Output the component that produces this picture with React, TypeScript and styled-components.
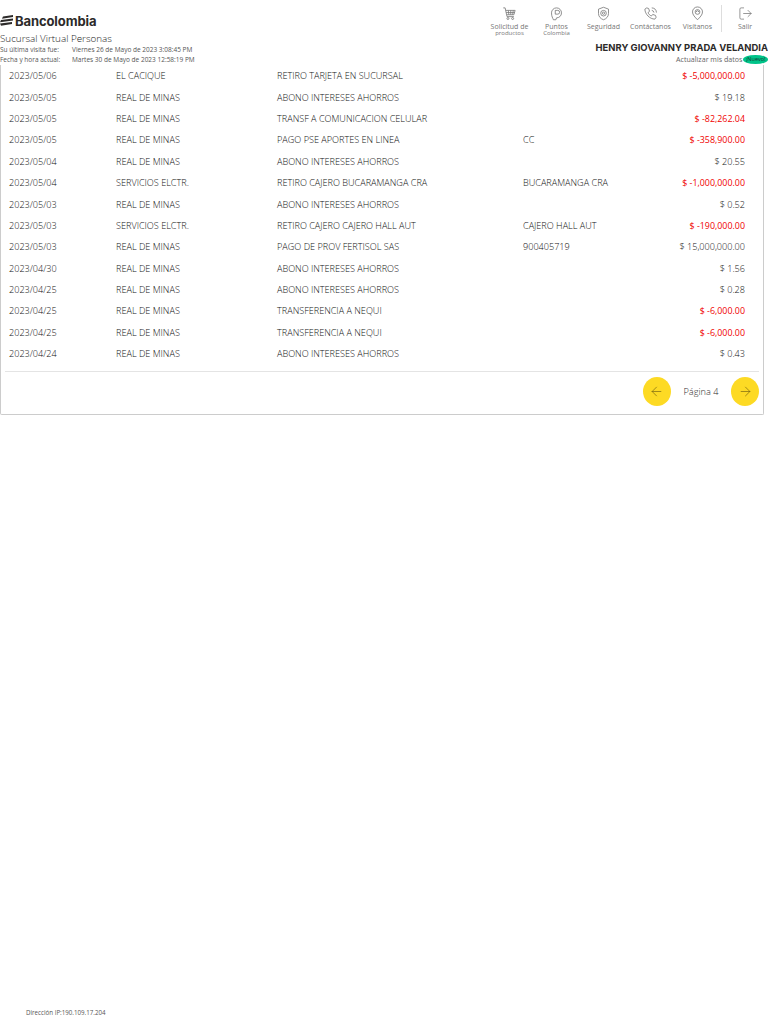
import React from "react";
import styled, { createGlobalStyle } from "styled-components";
import { ArrowLeft, ArrowRight, LogOut } from "lucide-react";

const GlobalStyle = createGlobalStyle`
	html, body {
		margin: 0;
		padding: 0;
		background: #fff;
		font-family: "Open Sans", "Liberation Sans", sans-serif;
		color: #2c2a29;
	}
`;

const rows = [
	["2023/05/06", "EL CACIQUE", "RETIRO TARJETA EN SUCURSAL", "", "$ -5,000,000.00"],
	["2023/05/05", "REAL DE MINAS", "ABONO INTERESES AHORROS", "", "$ 19.18"],
	["2023/05/05", "REAL DE MINAS", "TRANSF A COMUNICACION CELULAR", "", "$ -82,262.04"],
	["2023/05/05", "REAL DE MINAS", "PAGO PSE APORTES EN LINEA", "CC", "$ -358,900.00"],
	["2023/05/04", "REAL DE MINAS", "ABONO INTERESES AHORROS", "", "$ 20.55"],
	["2023/05/04", "SERVICIOS ELCTR.", "RETIRO CAJERO BUCARAMANGA CRA", "BUCARAMANGA CRA", "$ -1,000,000.00"],
	["2023/05/03", "REAL DE MINAS", "ABONO INTERESES AHORROS", "", "$ 0.52"],
	["2023/05/03", "SERVICIOS ELCTR.", "RETIRO CAJERO CAJERO HALL AUT", "CAJERO HALL AUT", "$ -190,000.00"],
	["2023/05/03", "REAL DE MINAS", "PAGO DE PROV FERTISOL SAS", "900405719", "$ 15,000,000.00"],
	["2023/04/30", "REAL DE MINAS", "ABONO INTERESES AHORROS", "", "$ 1.56"],
	["2023/04/25", "REAL DE MINAS", "ABONO INTERESES AHORROS", "", "$ 0.28"],
	["2023/04/25", "REAL DE MINAS", "TRANSFERENCIA A NEQUI", "", "$ -6,000.00"],
	["2023/04/25", "REAL DE MINAS", "TRANSFERENCIA A NEQUI", "", "$ -6,000.00"],
	["2023/04/24", "REAL DE MINAS", "ABONO INTERESES AHORROS", "", "$ 0.43"],
];

const Icon = ({ children }: { children: React.ReactNode }) => (
	<svg width="15" height="15" viewBox="0 0 24 24" fill="none" stroke="currentColor" strokeWidth="1.3">
		{children}
	</svg>
);

const CartIcon = () => (
	<Icon>
		<path d="M2 3h3l3 14h11" />
		<path d="M6 7h15l-2 7H8" />
		<path d="M6.5 10.5h13.5M10 7l1 7M14 7v7M18 7l-1 7" />
		<circle cx="9.5" cy="20" r="1.6" />
		<circle cx="17" cy="20" r="1.6" />
	</Icon>
);

const PuntosIcon = () => (
	<Icon>
		<path d="M7 22c-1-3-3-5-3-11a8 8 0 0 1 16 0c0 5-4 8-8 8l-1 3z" />
		<path d="M10 7h4a2.6 2.6 0 0 1 0 6h-4z" />
	</Icon>
);

const ShieldIcon = () => (
	<Icon>
		<path d="M12 2l8 3v7c0 5-3.5 8.500-8 10-4.500-1.500-8-5-8-10V5z" />
		<circle cx="12" cy="11.500" r="4.500" />
		<circle cx="12" cy="11.500" r="1.800" />
	</Icon>
);

const PhoneIcon = () => (
	<Icon>
		<path d="M6 3l3 1 1.500 4.500L8 10.500c1 2.500 3 4.500 5.500 5.500l2-2.500L20 15l1 3-2 3C11 21 3 13 3 5z" />
		<path d="M14 7a4 4 0 0 1 3.500 3.500M14 3a8 8 0 0 1 7.500 7.500" />
	</Icon>
);

const PinIcon = () => (
	<Icon>
		<path d="M12 22c-4-4-8-8-8-12.500a8 8 0 0 1 16 0C20 14 16 18 12 22z" />
		<circle cx="12" cy="9.500" r="3.800" />
		<path d="M9.500 9.500L12 7.500l2.500 2" />
	</Icon>
);

const navItems = [
	{ label: "Solicitud de", sub: "productos", icon: <CartIcon /> },
	{ label: "Puntos", sub: "Colombia", icon: <PuntosIcon /> },
	{ label: "Seguridad", icon: <ShieldIcon /> },
	{ label: "Contáctanos", icon: <PhoneIcon /> },
	{ label: "Visítanos", icon: <PinIcon /> },
];

const App = () => {
	return (
		<Page>
			<GlobalStyle />
			<Header>
				<HeaderLeft>
					<Logo>
						<svg width="14" height="11" viewBox="0 0 14 11" fill="#2c2a29">
							<path d="M3 1.600 13 0v2L2 3.800z" />
							<path d="M1 5 13 3.400v2L0 7.200z" />
							<path d="M0 8.600 12 7v2L1 10.800z" />
						</svg>
						<LogoText>Bancolombia</LogoText>
					</Logo>
					<Subtitle>Sucursal Virtual Personas</Subtitle>
					<VisitRow>
						<VisitLabel>Su última visita fue:</VisitLabel>
						<span>Viernes 26 de Mayo de 2023 3:08:45 PM</span>
					</VisitRow>
					<VisitRow>
						<VisitLabel>Fecha y hora actual:</VisitLabel>
						<span>Martes 30 de Mayo de 2023 12:58:19 PM</span>
					</VisitRow>
				</HeaderLeft>
				<HeaderRight>
					<Nav>
						{navItems.map((item) => (
							<NavItem key={item.label}>
								<NavIcon>{item.icon}</NavIcon>
								<NavLabel>{item.label}</NavLabel>
								{item.sub && <NavSub>{item.sub}</NavSub>}
							</NavItem>
						))}
						<ExitItem>
							<NavIcon>
								<LogOut size={15} strokeWidth={1.2} />
							</NavIcon>
							<NavLabel>Salir</NavLabel>
						</ExitItem>
					</Nav>
					<UserName>HENRY GIOVANNY PRADA VELANDIA</UserName>
					<UpdateRow>
						Actualizar mis datos
						<NewBadge>¡Nuevo!</NewBadge>
					</UpdateRow>
				</HeaderRight>
			</Header>
			<Panel>
				<Rows>
					{rows.map((row, i) => (
						<Row key={`row-${i}`}>
							<span>{row[0]}</span>
							<span>{row[1]}</span>
							<span>{row[2]}</span>
							<span>{row[3]}</span>
							<Amount $negative={row[4].includes("-")}>{row[4]}</Amount>
						</Row>
					))}
				</Rows>
				<Pager>
					<PagerButton>
						<ArrowLeft size={15} strokeWidth={1} />
					</PagerButton>
					<PagerLabel>Página 4</PagerLabel>
					<PagerButton>
						<ArrowRight size={15} strokeWidth={1} />
					</PagerButton>
				</Pager>
			</Panel>
			<Footer>Dirección IP:190.109.17.204</Footer>
		</Page>
	);
};

export default App;

const Page = styled.div`
	display: flex;
	flex-direction: column;
	min-height: 1024px;
	box-sizing: border-box;
`;

const Header = styled.header`
	display: flex;
	justify-content: space-between;
	height: 65px;
`;

const HeaderLeft = styled.div`
	display: flex;
	flex-direction: column;
	padding-top: 12px;
`;

const Logo = styled.div`
	display: flex;
	align-items: center;
	gap: 1px;
	height: 17px;
`;

const LogoText = styled.span`
	font-family: Inter, sans-serif;
	font-size: 13px;
	font-weight: 700;
	letter-spacing: -0.1px;
	color: #2c2a29;
`;

const Subtitle = styled.div`
	font-size: 9.85px;
	font-weight: 300;
	line-height: 14px;
	margin-top: 2px;
	color: #222;
`;

const VisitRow = styled.div`
	display: flex;
	font-size: 6.5px;
	line-height: 10px;
	color: #555;
`;

const VisitLabel = styled.span`
	width: 72px;
`;

const HeaderRight = styled.div`
	display: flex;
	flex-direction: column;
	align-items: flex-end;
`;

const Nav = styled.nav`
	display: flex;
	height: 42px;
	padding-top: 5px;
	box-sizing: border-box;
`;

const NavItem = styled.div`
	display: flex;
	flex-direction: column;
	align-items: center;
	width: 47px;
	color: #777;
`;

const ExitItem = styled(NavItem)`
	width: 46px;
	border-left: 1px solid #ddd;
	height: 27px;
`;

const NavIcon = styled.div`
	display: flex;
	height: 16px;
	align-items: center;
	margin-bottom: 2px;
`;

const NavLabel = styled.span`
	font-size: 7px;
	line-height: 7px;
	white-space: nowrap;
`;

const NavSub = styled.span`
	font-size: 6px;
	line-height: 7px;
	white-space: nowrap;
`;

const UserName = styled.div`
	font-family: Inter, sans-serif;
	font-size: 9.45px;
	font-weight: 700;
	line-height: 12px;
`;

const UpdateRow = styled.div`
	display: flex;
	align-items: center;
	gap: 1px;
	font-size: 7.1px;
	line-height: 10px;
	color: #666;
`;

const NewBadge = styled.span`
	background: #00c389;
	border-radius: 50%;
	font-size: 5.5px;
	line-height: 9px;
	padding: 0 2.5px;
	color: #143c30;
`;

const Panel = styled.section`
	width: 764px;
	height: 350px;
	box-sizing: border-box;
	border: 1px solid #ccc;
	border-top: none;
	border-radius: 0 0 2px 2px;
	padding: 0 4px;
	display: flex;
	flex-direction: column;
`;

const Rows = styled.div`
	display: flex;
	flex-direction: column;
	border-bottom: 1px solid #e4e4e4;
	padding-bottom: 7px;
`;

const Row = styled.div`
	display: grid;
	grid-template-columns: 107px 161px 246px 100px 1fr;
	align-items: center;
	height: 21.4px;
	padding: 0 14px 0 4px;
	font-size: 9.1px;
	font-weight: 300;
	color: #111;
	white-space: nowrap;
`;

const Amount = styled.span<{ $negative: boolean }>`
	text-align: right;
	color: ${(p) => (p.$negative ? "#f00000" : "#111")};
	font-weight: ${(p) => (p.$negative ? 400 : 300)};
	font-size: ${(p) => (p.$negative ? "8.9px" : "9.1px")};
`;

const Pager = styled.div`
	display: flex;
	justify-content: flex-end;
	align-items: center;
	gap: 12.500px;
	padding: 5px 0 0;
`;

const PagerButton = styled.div`
	display: flex;
	align-items: center;
	justify-content: center;
	width: 28px;
	height: 29px;
	border-radius: 50%;
	background: #fdda24;
	color: #6b5a10;
`;

const PagerLabel = styled.span`
	font-size: 9.2px;
	font-weight: 300;
	color: #2c2a29;
`;

const Footer = styled.footer`
	margin-top: auto;
	margin-bottom: 7px;
	padding-left: 26px;
	font-size: 6.2px;
	line-height: 8px;
	color: #555;
`;
